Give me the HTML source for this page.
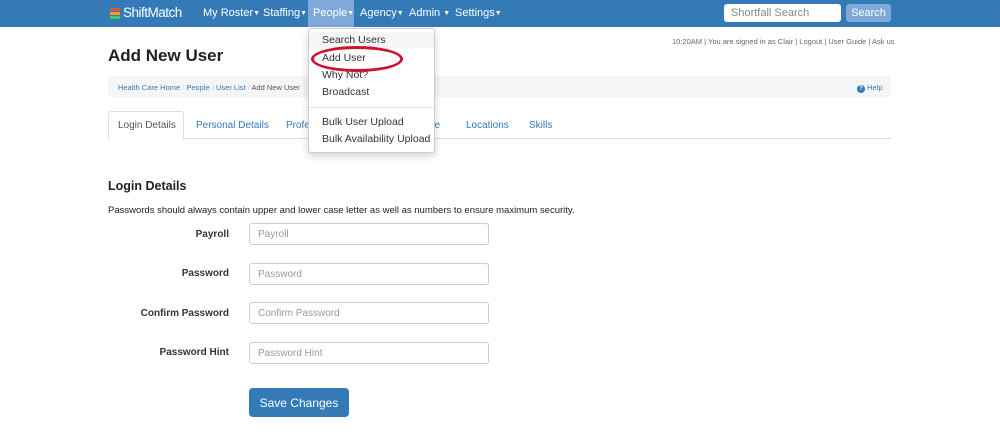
<!DOCTYPE html><html><head><style>
body{margin:0;width:1000px;height:446px;background:#fff;font-family:"Liberation Sans",sans-serif;position:relative;overflow:hidden;color:#333}
.a{position:absolute;white-space:nowrap}
.nav{position:absolute;left:0;top:0;width:1000px;height:27px;background:#337ab7}
.ni{position:absolute;top:7px;color:#fff;font-size:11px}
.ni i{font-style:normal;font-size:7px;vertical-align:1px}
.lbl{position:absolute;font-size:10px;font-weight:bold;text-align:right;width:130px;left:99px}
.in{position:absolute;left:249px;width:238px;height:20px;border:1px solid #ccc;border-radius:3px;font-size:10px;color:#999;line-height:21px;text-indent:8px}
.dd{position:absolute;left:308px;top:28px;width:125px;height:123px;background:#fff;border:1px solid #ccc;border-radius:3px;box-shadow:0 3px 8px rgba(0,0,0,.18)}
.di{position:absolute;left:13px;font-size:10.5px;color:#333}
</style></head><body>
<div class="nav"></div>
<div class="a" style="left:110px;top:8px;width:10px;height:3px;background:#e74c3c"></div>
<div class="a" style="left:110px;top:12px;width:10px;height:3px;background:#f39c12"></div>
<div class="a" style="left:110px;top:16px;width:10px;height:3px;background:#2ecc71"></div>
<div class="a" style="left:123px;top:5px;color:#fff;font-size:13.5px;letter-spacing:-0.5px">ShiftMatch</div>
<div class="ni" style="left:203px">My Roster<i>▼</i></div>
<div class="ni" style="left:263px">Staffing<i>▼</i></div>
<div class="a" style="left:308px;top:0;width:46px;height:27px;background:#7fa9d8"></div>
<div class="ni" style="left:313px">People<i>▼</i></div>
<div class="ni" style="left:360px">Agency<i>▼</i></div>
<div class="ni" style="left:409px">Admin <i>▼</i></div>
<div class="ni" style="left:455px">Settings<i>▼</i></div>
<div class="a" style="left:724px;top:4px;width:117px;height:18px;background:#fff;border-radius:3px;font-size:11px;color:#888;line-height:19px;text-indent:7px">Shortfall Search</div>
<div class="a" style="left:846px;top:4px;width:45px;height:18px;background:#7fa9d8;border-radius:3px;font-size:11px;color:#fff;line-height:19px;text-align:center">Search</div>
<div class="a" style="left:672px;top:37px;font-size:7.5px;color:#666">10:20AM | You are signed in as Clair | Logout | User Guide | Ask us</div>
<div class="a" style="left:108px;top:46px;font-size:17px;font-weight:bold;color:#222">Add New User</div>
<div class="a" style="left:108px;top:76px;width:783px;height:21px;background:#f5f5f5;border-radius:3px"></div>
<div class="a" style="left:118px;top:83px;font-size:7.5px;color:#337ab7">Health Care Home <span style="color:#ccc">/</span> People <span style="color:#ccc">/</span> User List <span style="color:#ccc">/</span> <span style="color:#555">Add New User</span></div>
<div class="a" style="left:857px;top:83px;font-size:7.5px;color:#337ab7"><span style="display:inline-block;width:8px;height:8px;border-radius:50%;background:#337ab7;color:#fff;font-size:6px;text-align:center;line-height:8px;font-weight:bold">?</span> Help</div>
<div class="a" style="left:108px;top:138px;width:783px;height:1px;background:#ddd"></div>
<div class="a" style="left:108px;top:111px;width:74px;height:27px;border:1px solid #ddd;border-bottom:1px solid #fff;border-radius:3px 3px 0 0;background:#fff"></div>
<div class="a" style="left:118px;top:120px;font-size:10px;color:#555">Login Details</div>
<div class="a" style="left:196px;top:120px;font-size:10px;color:#337ab7">Personal Details</div>
<div class="a" style="left:286px;top:120px;font-size:10px;color:#337ab7">Professional</div>
<div class="a" style="left:424px;top:120px;font-size:10px;color:#337ab7">nce</div>
<div class="a" style="left:466px;top:120px;font-size:10px;color:#337ab7">Locations</div>
<div class="a" style="left:529px;top:120px;font-size:10px;color:#337ab7">Skills</div>
<div class="a" style="left:108px;top:179px;font-size:12.5px;font-weight:bold;color:#222">Login Details</div>
<div class="a" style="left:108px;top:205px;font-size:9.5px;color:#222">Passwords should always contain upper and lower case letter as well as numbers to ensure maximum security.</div>
<div class="lbl" style="top:229px">Payroll</div><div class="in" style="top:223px">Payroll</div>
<div class="lbl" style="top:268px">Password</div><div class="in" style="top:263px">Password</div>
<div class="lbl" style="top:308px">Confirm Password</div><div class="in" style="top:302px">Confirm Password</div>
<div class="lbl" style="top:347px">Password Hint</div><div class="in" style="top:342px">Password Hint</div>
<div class="a" style="left:249px;top:388px;width:100px;height:29px;background:#337ab7;border-radius:4px;color:#fff;font-size:12px;line-height:30px;text-align:center">Save Changes</div>
<div class="dd">
<div class="a" style="left:0;top:3px;width:125px;height:16px;background:#f5f5f5"></div>
<div class="di" style="top:5px">Search Users</div>
<div class="di" style="top:23px">Add User</div>
<div class="di" style="top:40px">Why Not?</div>
<div class="di" style="top:57px">Broadcast</div>
<div class="a" style="left:0;top:78px;width:125px;height:1px;background:#e5e5e5"></div>
<div class="di" style="top:87px">Bulk User Upload</div>
<div class="di" style="top:104px">Bulk Availability Upload</div>
</div>
<div class="a" style="left:311px;top:46px;width:86px;height:20px;border:3px solid #d0112b;border-radius:50%"></div>
</body></html>
